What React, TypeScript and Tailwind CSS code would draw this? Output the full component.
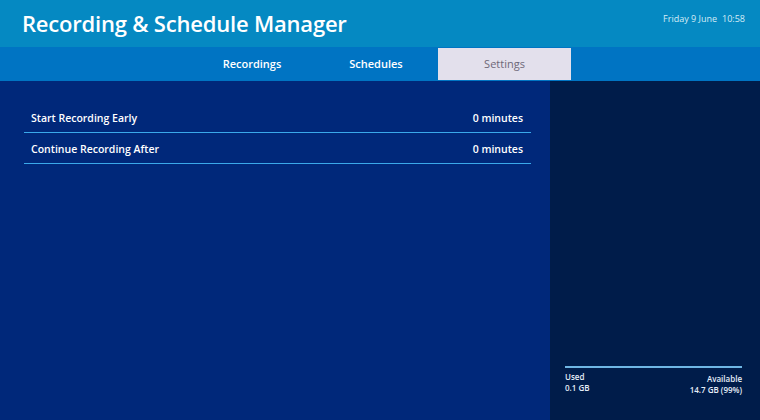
import React from 'react';

const rows = [
  { label: 'Start Recording Early', value: '0 minutes' },
  { label: 'Continue Recording After', value: '0 minutes' },
];

const tabs = [
  { name: 'Recordings', w: 'w-[124px]' },
  { name: 'Schedules', w: 'w-[124px]' },
];

export default function App() {
  return (
    <div className="w-[760px] h-[420px] flex flex-col overflow-hidden font-['Open_Sans',sans-serif] text-white">
      <header className="h-[47px] bg-[#0589c2] flex items-center justify-between pl-[22px] pr-[15px]">
        <h1 className="text-[22px] font-semibold tracking-[-0.2px] leading-none -mt-[2px]">Recording &amp; Schedule Manager</h1>
        <div className="text-[9px] text-[#d6ecf6] -mt-[10px] flex gap-[5px]">
          <span>Friday 9 June</span>
          <span>10:58</span>
        </div>
      </header>

      <nav className="h-[34px] bg-[#0074c3] flex items-stretch pl-[190px] text-[11px] font-semibold">
        {tabs.map((t) => (
          <div key={t.name} className={`${t.w} flex items-center justify-center`}>
            {t.name}
          </div>
        ))}
        <div className="w-[133px] my-[1px] bg-[#e3e0ec] text-[#6e6878] font-normal flex items-center justify-center">
          Settings
        </div>
      </nav>

      <main className="flex-1 flex">
        <section className="w-[550px] bg-[#00287a] pt-[21px] pl-[24px] pr-[19px]">
          {rows.map((r) => (
            <div key={r.label} className="h-[31px] border-b border-[#3aa9ea] flex items-center justify-between pt-[3px] pl-[7px] pr-[8px] text-[10.5px] font-semibold">
              <span>{r.label}</span>
              <span>{r.value}</span>
            </div>
          ))}
        </section>

        <aside className="flex-1 bg-[#001c4a] flex flex-col justify-end pl-[15px] pr-[18px] pb-[25px]">
          <div className="h-[2px] bg-[#6fb6e4] mb-[3px]" />
          <div className="flex justify-between text-[8px] leading-[11px] font-semibold text-[#e6eef8]">
            <div>
              <div>Used</div>
              <div>0.1 GB</div>
            </div>
            <div className="text-right pt-[2px]">
              <div>Available</div>
              <div>14.7 GB (99%)</div>
            </div>
          </div>
        </aside>
      </main>
    </div>
  );
}
